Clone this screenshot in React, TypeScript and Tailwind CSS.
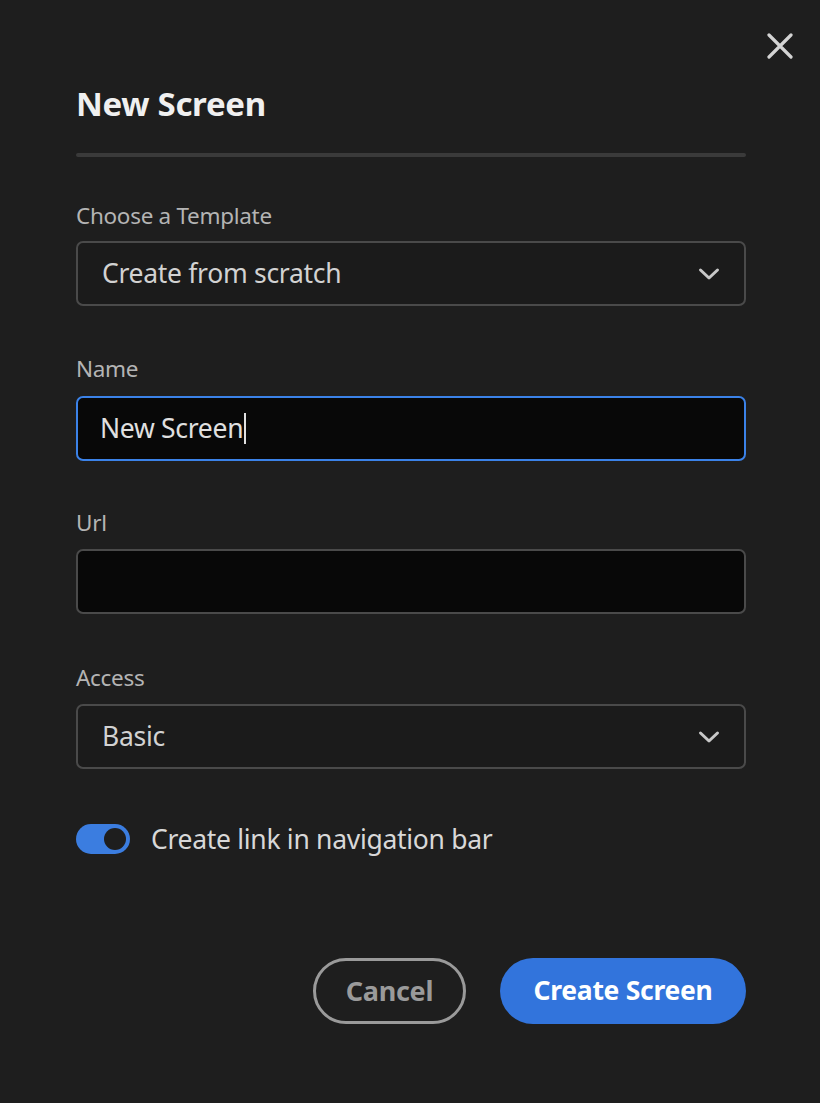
import React from "react";

const Chevron = () => (
  <svg width="22" height="14" viewBox="0 0 22 14" fill="none">
    <path d="M2.5 3 L11 11 L19.5 3" stroke="#c8c8c8" strokeWidth="3" strokeLinecap="round" strokeLinejoin="round" />
  </svg>
);

export default function App() {
  return (
    <div
      className="w-[820px] h-[1103px] bg-[#1e1e1e] relative flex flex-col pl-[76px] pr-[74px] pt-[82px]"
      style={{ fontFamily: '"Source Sans Pro", "Noto Sans", sans-serif' }}
    >
      <button className="absolute right-[27px] top-[33px] w-[26px] h-[26px] flex items-center justify-center">
        <svg width="26" height="26" viewBox="0 0 26 26">
          <path d="M2 2 L24 24 M24 2 L2 24" stroke="#d4d4d4" strokeWidth="3.2" strokeLinecap="round" />
        </svg>
      </button>

      <h1 className="text-[33px] leading-[44px] font-bold text-[#f0f0f0] tracking-[-0.3px]">New Screen</h1>
      <div className="mt-[27px] h-[4px] rounded-full bg-[#3a3a3a]" />

      <label className="mt-[44px] text-[22.5px] leading-[30px] text-[#b4b4b4] tracking-[-0.3px]">Choose a Template</label>
      <div className="mt-[10px] h-[65px] rounded-[7px] border-2 border-[#4a4a4a] bg-[#1b1b1b] flex items-center justify-between pl-[24px] pr-[24px]">
        <span className="text-[26.5px] text-[#d2d2d2] tracking-[-0.3px]">Create from scratch</span>
        <Chevron />
      </div>

      <label className="mt-[48px] text-[22.5px] leading-[30px] text-[#b4b4b4] tracking-[-0.3px]">Name</label>
      <div className="mt-[12px] h-[65px] rounded-[7px] border-2 border-[#3b82e8] bg-[#080808] flex items-center pl-[22px]">
        <span className="text-[26.5px] text-[#e0e0e0] tracking-[-0.3px]">New Screen</span>
        <span className="w-[2px] h-[31px] bg-[#e0e0e0] ml-[1px]" />
      </div>

      <label className="mt-[47px] text-[22.5px] leading-[30px] text-[#b4b4b4] tracking-[-0.3px]">Url</label>
      <div className="mt-[11px] h-[65px] rounded-[7px] border-2 border-[#4a4a4a] bg-[#080808]" />

      <label className="mt-[49px] text-[22.5px] leading-[30px] text-[#b4b4b4] tracking-[-0.3px]">Access</label>
      <div className="mt-[11px] h-[65px] rounded-[7px] border-2 border-[#4a4a4a] bg-[#1b1b1b] flex items-center justify-between pl-[24px] pr-[24px]">
        <span className="text-[26.5px] text-[#d2d2d2] tracking-[-0.3px]">Basic</span>
        <Chevron />
      </div>

      <div className="mt-[52px] h-[36px] flex items-center gap-[21px]">
        <div className="w-[54px] h-[30px] rounded-full bg-[#3b7de0] flex items-center justify-end pr-[4px]">
          <div className="w-[22px] h-[22px] rounded-full bg-[#1e1e1e]" />
        </div>
        <span className="text-[26.5px] leading-[36px] text-[#d8d8d8] tracking-[-0.3px]">Create link in navigation bar</span>
      </div>

      <div className="mt-[101px] flex justify-end gap-[34px]">
        <button className="w-[153px] h-[66px] rounded-full border-[3px] border-[#9a9a9a] text-[#9a9a9a] text-[27px] font-bold tracking-[-0.3px]">
          Cancel
        </button>
        <button className="w-[246px] h-[66px] rounded-full bg-[#3274dc] text-white text-[26.5px] font-bold tracking-[-0.3px]">
          Create Screen
        </button>
      </div>
    </div>
  );
}
